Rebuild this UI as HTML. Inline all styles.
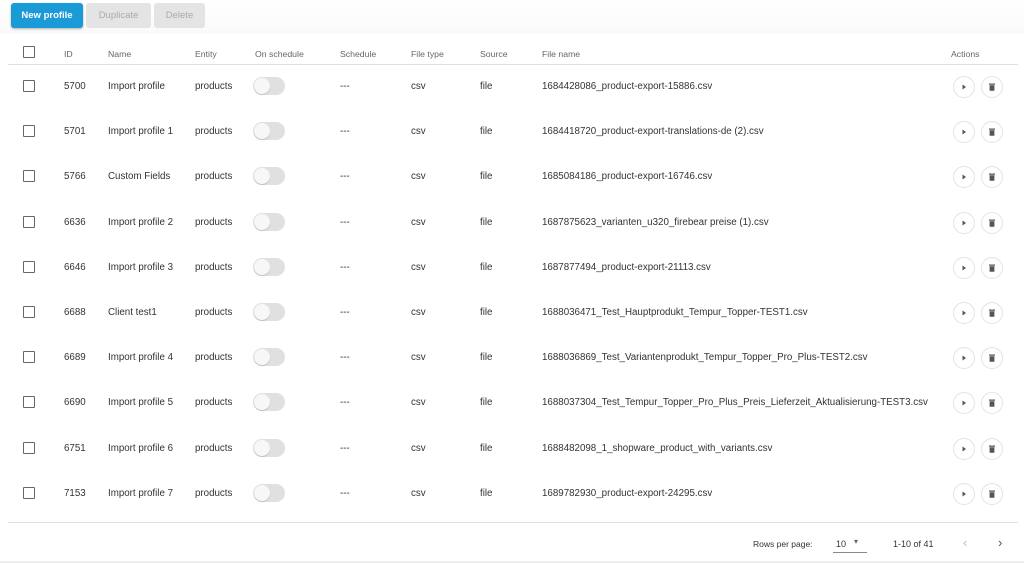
<!DOCTYPE html>
<html><head><meta charset="utf-8"><style>
*{margin:0;padding:0;box-sizing:border-box}
body{width:1024px;height:563px;background:#fff;font-family:"Liberation Sans",sans-serif;color:#333;position:relative;overflow:hidden;font-size:9.75px}
.a{position:absolute;white-space:nowrap}
.btn{position:absolute;top:3px;height:25px;border-radius:3px;font-size:9.5px;line-height:25px;text-align:center}
.h{color:#666;font-size:8.7px}
.cb{position:absolute;width:12px;height:12px;border:1.5px solid #666;border-radius:1px}
.tg{position:absolute;width:32px;height:18px;border-radius:9px;background:#e0e0e0}
.tg:after{content:"";position:absolute;left:1px;top:1px;width:16px;height:16px;border-radius:50%;background:#f7f7f7;box-shadow:0 1px 1px rgba(0,0,0,.15)}
.ic{position:absolute;width:22px;height:22px;border-radius:50%;border:1px solid #e3e3e3;background:#fff}
</style></head><body>
<div class="a" style="left:0;top:0;width:1024px;height:34px;background:linear-gradient(#fff,#fafafa)"></div>
<div class="btn" style="left:11px;width:72px;background:#1a9ad6;color:#fff;font-weight:bold;box-shadow:0 1px 2px rgba(0,0,0,.3)">New profile</div>
<div class="btn" style="left:86px;width:65px;background:#e4e4e4;color:#aaa">Duplicate</div>
<div class="btn" style="left:154px;width:51px;background:#e4e4e4;color:#aaa">Delete</div>
<div class="cb" style="left:23px;top:46px"></div>
<div class="a h" style="left:64px;top:49px">ID</div>
<div class="a h" style="left:108px;top:49px">Name</div>
<div class="a h" style="left:195px;top:49px">Entity</div>
<div class="a h" style="left:255px;top:49px">On schedule</div>
<div class="a h" style="left:340px;top:49px">Schedule</div>
<div class="a h" style="left:411px;top:49px">File type</div>
<div class="a h" style="left:480px;top:49px">Source</div>
<div class="a h" style="left:542px;top:49px">File name</div>
<div class="a h" style="left:951px;top:49px">Actions</div>
<div class="a" style="left:8px;top:64px;width:1010px;height:1px;background:#e0e0e0"></div>
<div id="rows"></div>
<div class="a" style="left:8px;top:522px;width:1010px;height:1px;background:#e0e0e0"></div>
<div class="a" style="left:753px;top:539px;font-size:8.5px">Rows per page:</div>
<div class="a" style="left:836px;top:539px;font-size:9px">10</div>
<div class="a" style="left:854px;top:537px;font-size:8px;color:#666">▾</div>
<div class="a" style="left:833px;top:552px;width:34px;height:1px;background:#888"></div>
<div class="a" style="left:893px;top:539px;font-size:9px">1-10 of 41</div>
<div class="a" style="left:963px;top:535px;font-size:13px;color:#bbb">‹</div>
<div class="a" style="left:998px;top:535px;font-size:13px;color:#555">›</div>
<div class="a" style="left:0;top:561px;width:1024px;height:2px;background:#eee"></div>
<script>
var d=[["5700","Import profile","1684428086_product-export-15886.csv"],["5701","Import profile 1","1684418720_product-export-translations-de (2).csv"],["5766","Custom Fields","1685084186_product-export-16746.csv"],["6636","Import profile 2","1687875623_varianten_u320_firebear preise (1).csv"],["6646","Import profile 3","1687877494_product-export-21113.csv"],["6688","Client test1","1688036471_Test_Hauptprodukt_Tempur_Topper-TEST1.csv"],["6689","Import profile 4","1688036869_Test_Variantenprodukt_Tempur_Topper_Pro_Plus-TEST2.csv"],["6690","Import profile 5","1688037304_Test_Tempur_Topper_Pro_Plus_Preis_Lieferzeit_Aktualisierung-TEST3.csv"],["6751","Import profile 6","1688482098_1_shopware_product_with_variants.csv"],["7153","Import profile 7","1689782930_product-export-24295.csv"]];
var h="";d.forEach(function(r,i){var y=Math.round(86+i*45.2);var t=y-5;
h+='<div class="cb" style="left:23px;top:'+(y-6)+'px"></div>'+
'<div class="a" style="left:64px;top:'+t+'px">'+r[0]+'</div>'+
'<div class="a" style="left:108px;top:'+t+'px">'+r[1]+'</div>'+
'<div class="a" style="left:195px;top:'+t+'px">products</div>'+
'<div class="tg" style="left:253px;top:'+(y-9)+'px"></div>'+
'<div class="a" style="left:340px;top:'+t+'px">---</div>'+
'<div class="a" style="left:411px;top:'+t+'px">csv</div>'+
'<div class="a" style="left:480px;top:'+t+'px">file</div>'+
'<div class="a" style="left:542px;top:'+t+'px">'+r[2]+'</div>'+
'<div class="ic" style="left:953px;top:'+(y-10)+'px"><svg width="20" height="20" viewBox="0 0 20 20"><path d="M8.5 7.5L12 10L8.5 12.5Z" fill="#555"/></svg></div>'+
'<div class="ic" style="left:981px;top:'+(y-10)+'px"><svg width="20" height="20" viewBox="0 0 20 20"><path d="M7 6.5h6v1.2h-6zM7.6 8.2h4.8v5.5h-4.8z" fill="#555"/></svg></div>';
});
document.getElementById("rows").innerHTML=h;
</script>
</body></html>
